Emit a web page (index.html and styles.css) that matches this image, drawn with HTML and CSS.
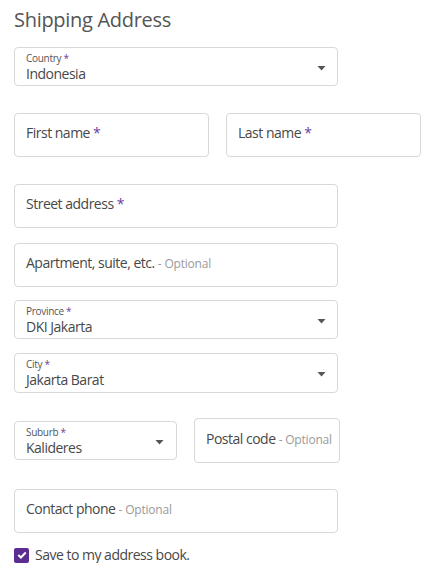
FILE: index.html
```html
<!DOCTYPE html>
<html lang="en">
<head>
    <meta charset="UTF-8">
    <meta name="viewport" content="width=device-width, initial-scale=1.0">
    <title>Shipping Address</title>
    <link rel="stylesheet" href="styles.css">
</head>
<body>
    <div class="container">
        <h2>Shipping Address</h2>

        <div class="box select country">
            <div class="stack">
                <span class="label">Country <b>*</b></span>
                <span class="value">Indonesia</span>
            </div>
            <svg class="arrow" width="9" height="5" viewBox="0 0 9 5"><path d="M0.5 0h8L4.5 4.5z"/></svg>
        </div>

        <div class="row names">
            <div class="box field half"><span>First name <b>*</b></span></div>
            <div class="box field half"><span>Last name <b>*</b></span></div>
        </div>

        <div class="box field street"><span>Street address <b>*</b></span></div>
        <div class="box field apt"><span>Apartment, suite, etc. <i>- Optional</i></span></div>

        <div class="box select province">
            <div class="stack">
                <span class="label">Province <b>*</b></span>
                <span class="value">DKI Jakarta</span>
            </div>
            <svg class="arrow" width="9" height="5" viewBox="0 0 9 5"><path d="M0.5 0h8L4.5 4.5z"/></svg>
        </div>

        <div class="box select city">
            <div class="stack">
                <span class="label">City <b>*</b></span>
                <span class="value">Jakarta Barat</span>
            </div>
            <svg class="arrow" width="9" height="5" viewBox="0 0 9 5"><path d="M0.5 0h8L4.5 4.5z"/></svg>
        </div>

        <div class="row suburb-row">
            <div class="box select suburb">
                <div class="stack">
                    <span class="label">Suburb <b>*</b></span>
                    <span class="value">Kalideres</span>
                </div>
                <svg class="arrow" width="9" height="5" viewBox="0 0 9 5"><path d="M0.5 0h8L4.5 4.5z"/></svg>
            </div>
            <div class="box field postal"><span>Postal code <i>- Optional</i></span></div>
        </div>

        <div class="box field phone"><span>Contact phone <i>- Optional</i></span></div>

        <label class="check">
            <span class="tick">
                <svg width="10" height="8" viewBox="0 0 10 8"><path d="M1.3 4l2.6 2.5L8.7 1.5" fill="none" stroke="#fff" stroke-width="2"/></svg>
            </span>
            <span>Save to my address book.</span>
        </label>
    </div>
</body>
</html>
```

FILE: styles.css
```css
body {
    margin: 0;
    padding: 0;
    font-family: "Open Sans", Arial, sans-serif;
    color: #484848;
    background: #fff;
}
.container {
    padding: 0 14px;
}
h2 {
    margin: 0;
    padding-top: 5px;
    font-size: 20px;
    font-weight: 400;
    line-height: 30px;
    letter-spacing: -0.3px;
    color: #555;
}
.box {
    box-sizing: border-box;
    border: 1px solid #d8d8d8;
    border-radius: 4px;
    background: #fff;
    width: 324px;
}
.box b {
    color: #6b3fa0;
    font-weight: 400;
}
.box i {
    font-style: normal;
    font-size: 12px;
    letter-spacing: -0.2px;
    color: #9a9a9a;
}
.field {
    height: 44px;
    display: flex;
    align-items: center;
    padding: 0 11px 5px;
    font-size: 14px;
    letter-spacing: -0.5px;
    white-space: nowrap;
}
.select {
    height: 39px;
    display: flex;
    align-items: flex-start;
    justify-content: space-between;
    padding: 4px 11px 0 11px;
}
.stack {
    display: flex;
    flex-direction: column;
}
.label {
    font-size: 10px;
    line-height: 12px;
    letter-spacing: -0.3px;
    color: #555;
}
.value {
    font-size: 14px;
    line-height: 20px;
    letter-spacing: -0.5px;
}
.arrow {
    margin-top: 14px;
    fill: #555;
}
.row {
    display: flex;
    gap: 17px;
}
.half {
    width: 195px;
}
.country {
    margin-top: 12px;
}
.names {
    margin-top: 27px;
}
.street {
    margin-top: 27px;
}
.apt {
    margin-top: 15px;
}
.province {
    margin-top: 13px;
}
.city {
    margin-top: 14px;
    height: 40px;
}
.suburb-row {
    margin-top: 25px;
    align-items: center;
}
.suburb {
    width: 163px;
    padding-right: 12px;
}
.postal {
    width: 146px;
    height: 45px;
}
.phone {
    margin-top: 26px;
}
.check {
    display: flex;
    align-items: center;
    gap: 6px;
    margin-top: 14px;
    font-size: 14px;
    line-height: 16px;
    letter-spacing: -0.5px;
}
.tick {
    width: 15px;
    height: 15px;
    border-radius: 2px;
    background: #5c2d91;
    display: flex;
    align-items: center;
    justify-content: center;
}
```
